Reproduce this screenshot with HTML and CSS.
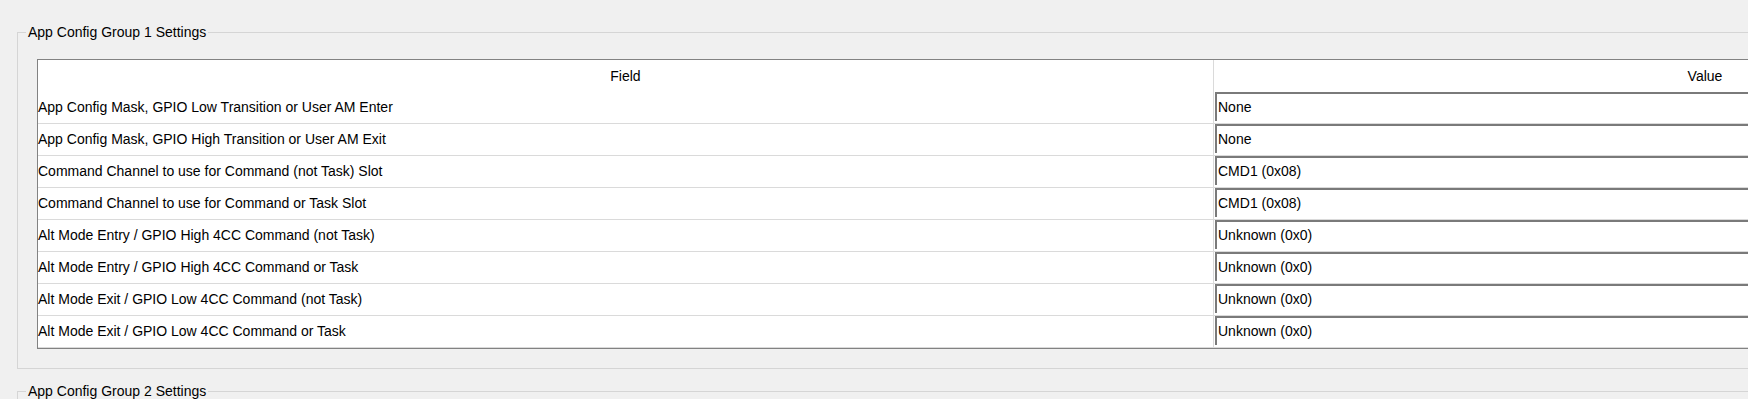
FILE: index.html
```html
<!DOCTYPE html>
<html lang="en">
<head>
    <meta charset="UTF-8">
    <meta name="viewport" content="width=device-width, initial-scale=1.0">
    <title>App Config Settings</title>
    <link rel="stylesheet" href="styles.css">
</head>
<body>
    <div class="window">
        <fieldset class="group">
            <legend>App Config Group 1 Settings</legend>
            <table class="settings">
                <thead>
                    <tr>
                        <th class="field">Field</th>
                        <th class="value">Value</th>
                    </tr>
                </thead>
                <tbody>
                    <tr>
                        <td class="field">App Config Mask, GPIO Low Transition or User AM Enter</td>
                        <td class="value"><div class="value-box">None</div></td>
                    </tr>
                    <tr>
                        <td class="field">App Config Mask, GPIO High Transition or User AM Exit</td>
                        <td class="value"><div class="value-box">None</div></td>
                    </tr>
                    <tr>
                        <td class="field">Command Channel to use for Command (not Task) Slot</td>
                        <td class="value"><div class="value-box">CMD1 (0x08)</div></td>
                    </tr>
                    <tr>
                        <td class="field">Command Channel to use for Command or Task Slot</td>
                        <td class="value"><div class="value-box">CMD1 (0x08)</div></td>
                    </tr>
                    <tr>
                        <td class="field">Alt Mode Entry / GPIO High 4CC Command (not Task)</td>
                        <td class="value"><div class="value-box">Unknown (0x0)</div></td>
                    </tr>
                    <tr>
                        <td class="field">Alt Mode Entry / GPIO High 4CC Command or Task</td>
                        <td class="value"><div class="value-box">Unknown (0x0)</div></td>
                    </tr>
                    <tr>
                        <td class="field">Alt Mode Exit / GPIO Low 4CC Command (not Task)</td>
                        <td class="value"><div class="value-box">Unknown (0x0)</div></td>
                    </tr>
                    <tr>
                        <td class="field">Alt Mode Exit / GPIO Low 4CC Command or Task</td>
                        <td class="value"><div class="value-box">Unknown (0x0)</div></td>
                    </tr>
                </tbody>
            </table>
        </fieldset>

        <fieldset class="group group-next">
            <legend>App Config Group 2 Settings</legend>
            <div class="group-body"></div>
        </fieldset>
    </div>
</body>
</html>
```

FILE: styles.css
```css
* {
    box-sizing: border-box;
}

body {
    margin: 0;
    background-color: #f0f0f0;
    color: #000;
    font-family: "Liberation Sans", Arial, sans-serif;
    font-size: 14px;
}

.window {
    width: 100vw;
    height: 100vh;
    overflow: hidden;
    padding: 24px 0 0 17px;
}

.group {
    margin: 0;
    padding: 19px 0 19px 8px;
    border: 1px solid #d5d5d5;
    width: 2300px;
}

.group legend {
    padding: 0 2px;
    line-height: 16px;
}

.group-next {
    margin-top: 14px;
}

.group-body {
    height: 200px;
}

.settings {
    margin-left: 11px;
    border: 1px solid #828282;
    border-spacing: 0;
    background-color: #fff;
    table-layout: fixed;
    width: 2160px;
}

.settings th {
    font-weight: normal;
    height: 32px;
    padding: 0;
    text-align: center;
}

.settings th.field {
    width: 1175px;
}

.settings th.value {
    border-left: 1px solid #dadada;
}

.settings td {
    height: 32px;
    padding: 0;
    border-bottom: 1px solid #dadada;
    vertical-align: top;
}

.settings td.field {
    line-height: 31px;
    white-space: nowrap;
}

.settings td.value {
    border-left: 1px solid #dadada;
    padding-left: 1px;
}

.value-box {
    height: 29px;
    line-height: 27px;
    padding-left: 1px;
    border-top: 2px solid #7a7a7a;
    border-left: 2px solid #7a7a7a;
    background-color: #fff;
    white-space: nowrap;
}
```
